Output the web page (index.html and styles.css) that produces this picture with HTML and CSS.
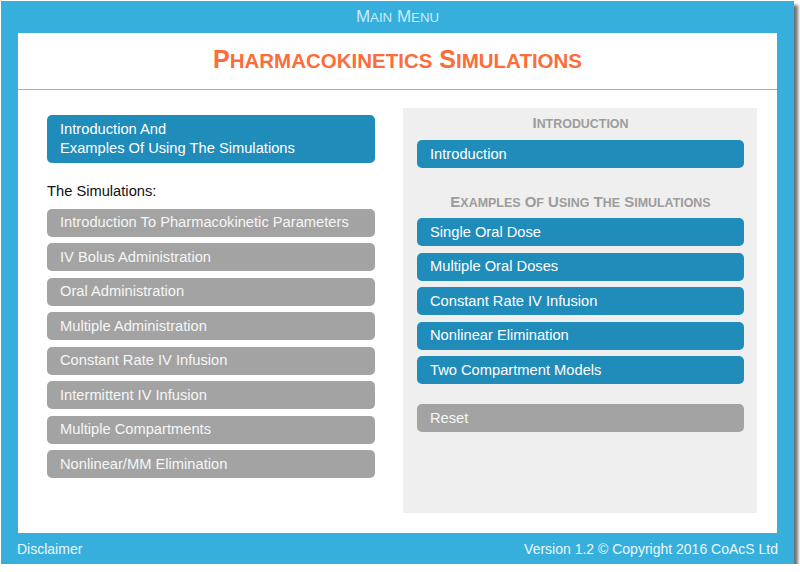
FILE: index.html
```html
<!DOCTYPE html>
<html>
<head>
<meta charset="utf-8">
<link rel="stylesheet" href="styles.css">
</head>
<body>
<div class="frame">
  <header class="topbar">M<span class="sc">ain</span> M<span class="sc">enu</span></header>
  <main class="sheet">
    <h1 class="title">P<span class="sc">harmacokinetics</span> S<span class="sc">imulations</span></h1>
    <div class="content">
      <div class="left">
        <button class="btn blue tall">Introduction And<br>Examples Of Using The Simulations</button>
        <div class="label">The Simulations:</div>
        <div class="list">
          <button class="btn grey">Introduction To Pharmacokinetic Parameters</button>
          <button class="btn grey">IV Bolus Administration</button>
          <button class="btn grey">Oral Administration</button>
          <button class="btn grey">Multiple Administration</button>
          <button class="btn grey">Constant Rate IV Infusion</button>
          <button class="btn grey">Intermittent IV Infusion</button>
          <button class="btn grey">Multiple Compartments</button>
          <button class="btn grey">Nonlinear/MM Elimination</button>
        </div>
      </div>
      <div class="panel">
        <h2 class="head first">I<span class="sc">ntroduction</span></h2>
        <button class="btn blue">Introduction</button>
        <h2 class="head second">E<span class="sc">xamples</span> O<span class="sc">f</span> U<span class="sc">sing</span> T<span class="sc">he</span> S<span class="sc">imulations</span></h2>
        <div class="list">
          <button class="btn blue">Single Oral Dose</button>
          <button class="btn blue">Multiple Oral Doses</button>
          <button class="btn blue">Constant Rate IV Infusion</button>
          <button class="btn blue">Nonlinear Elimination</button>
          <button class="btn blue">Two Compartment Models</button>
        </div>
        <button class="btn grey reset">Reset</button>
      </div>
    </div>
  </main>
  <footer class="footbar">
    <span>Disclaimer</span>
    <span>Version 1.2 © Copyright 2016 CoAcS Ltd</span>
  </footer>
</div>
</body>
</html>
```
FILE: styles.css
```css
html, body {
  margin: 0;
  padding: 0;
  background: #ffffff;
}
body {
  font-family: "Liberation Sans", Arial, sans-serif;
}
.frame {
  margin: 1px 0 0 1px;
  width: 793px;
  height: 563px;
  background: #37afdd;
  box-shadow: 4px 4px 3px rgba(0, 0, 0, 0.55);
  display: flex;
  flex-direction: column;
}
.sc {
  text-transform: uppercase;
  font-size: 0.78em;
}
.topbar {
  height: 32px;
  line-height: 32px;
  text-align: center;
  color: #c9ecf8;
  font-size: 17px;
}
.sheet {
  margin: 0 17px;
  height: 500px;
  background: #ffffff;
  display: flex;
  flex-direction: column;
}
.title {
  margin: 0;
  height: 56px;
  line-height: 52px;
  border-bottom: 1px solid #f8906c;
  text-align: center;
  color: #fb6d3a;
  font-size: 25px;
  font-weight: bold;
}
.title .sc {
  font-size: 0.82em;
}
.content {
  flex: 1;
  display: grid;
  grid-template-columns: 328px 354px;
  column-gap: 28px;
  padding: 18px 20px 20px 29px;
}
.left {
  padding-top: 7px;
  display: flex;
  flex-direction: column;
}
.btn {
  display: flex;
  align-items: center;
  width: 100%;
  height: 28px;
  margin: 0;
  padding: 0 13px;
  border: none;
  border-radius: 5px;
  font-family: "Liberation Sans", Arial, sans-serif;
  font-size: 14.7px;
  line-height: 19px;
  text-align: left;
  color: #ffffff;
}
.btn.blue {
  background: #1f8cba;
}
.btn.grey {
  background: #a3a3a3;
  color: #f6f6f6;
}
.btn.tall {
  height: 48px;
}
.label {
  margin: 19px 0 7.5px;
  font-size: 14.7px;
  line-height: 19px;
  color: #111111;
}
.list {
  display: flex;
  flex-direction: column;
  gap: 6.5px;
}
.panel {
  background: #efefef;
  padding: 0 13px 0 14px;
  display: flex;
  flex-direction: column;
}
.head {
  margin: 0;
  text-align: center;
  color: #9c9c9c;
  font-size: 15px;
  line-height: 19px;
  font-weight: bold;
}
.head .sc {
  font-size: 0.83em;
}
.head.first {
  padding-top: 5px;
  margin-bottom: 6px;
}
.head.second {
  margin-top: 24px;
  margin-bottom: 5px;
}
.reset {
  margin-top: 20px;
}
.footbar {
  flex: 1;
  display: flex;
  justify-content: space-between;
  align-items: center;
  padding: 0 16px 0 16px;
  color: #eaf7fc;
  font-size: 14px;
}
```
